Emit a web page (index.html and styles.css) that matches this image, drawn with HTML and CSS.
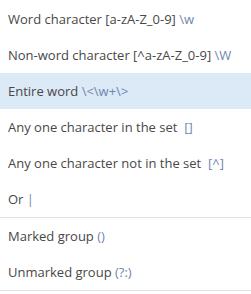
FILE: index.html
```html
<!DOCTYPE html>
<html lang="en">
<head>
  <meta charset="UTF-8">
  <title>Regex menu</title>
  <link rel="stylesheet" href="styles.css">
</head>
<body>
  <ul class="menu">
    <li class="item">Word character [a-zA-Z_0-9] <span class="code">\w</span></li>
    <li class="item">Non-word character [^a-zA-Z_0-9] <span class="code">\W</span></li>
    <li class="item active">Entire word <span class="code">\&lt;\w+\&gt;</span></li>
    <li class="item">Any one character in the set &nbsp;<span class="code">[]</span></li>
    <li class="item">Any one character not in the set &nbsp;<span class="code">[^]</span></li>
    <li class="item">Or <span class="code">|</span></li>
    <li class="sep"></li>
    <li class="item">Marked group <span class="code">()</span></li>
    <li class="item">Unmarked group <span class="code">(?:)</span></li>
    <li class="sep"></li>
  </ul>
</body>
</html>
```

FILE: styles.css
```css
body {
  margin: 0;
  background: #fff;
  font-family: "Open Sans", "Noto Sans", sans-serif;
  font-size: 13px;
  color: #484848;
}
.menu {
  list-style: none;
  margin: 0;
  padding: 0;
}
.item {
  height: 36px;
  line-height: 36px;
  padding-left: 8px;
  white-space: nowrap;
}
.item:first-child {
  margin-top: 1px;
}
.item.active {
  background-color: #dce9f7;
}
.code {
  color: #6f86b0;
}
.sep {
  height: 1px;
  background-color: #e2e2e2;
}
```
